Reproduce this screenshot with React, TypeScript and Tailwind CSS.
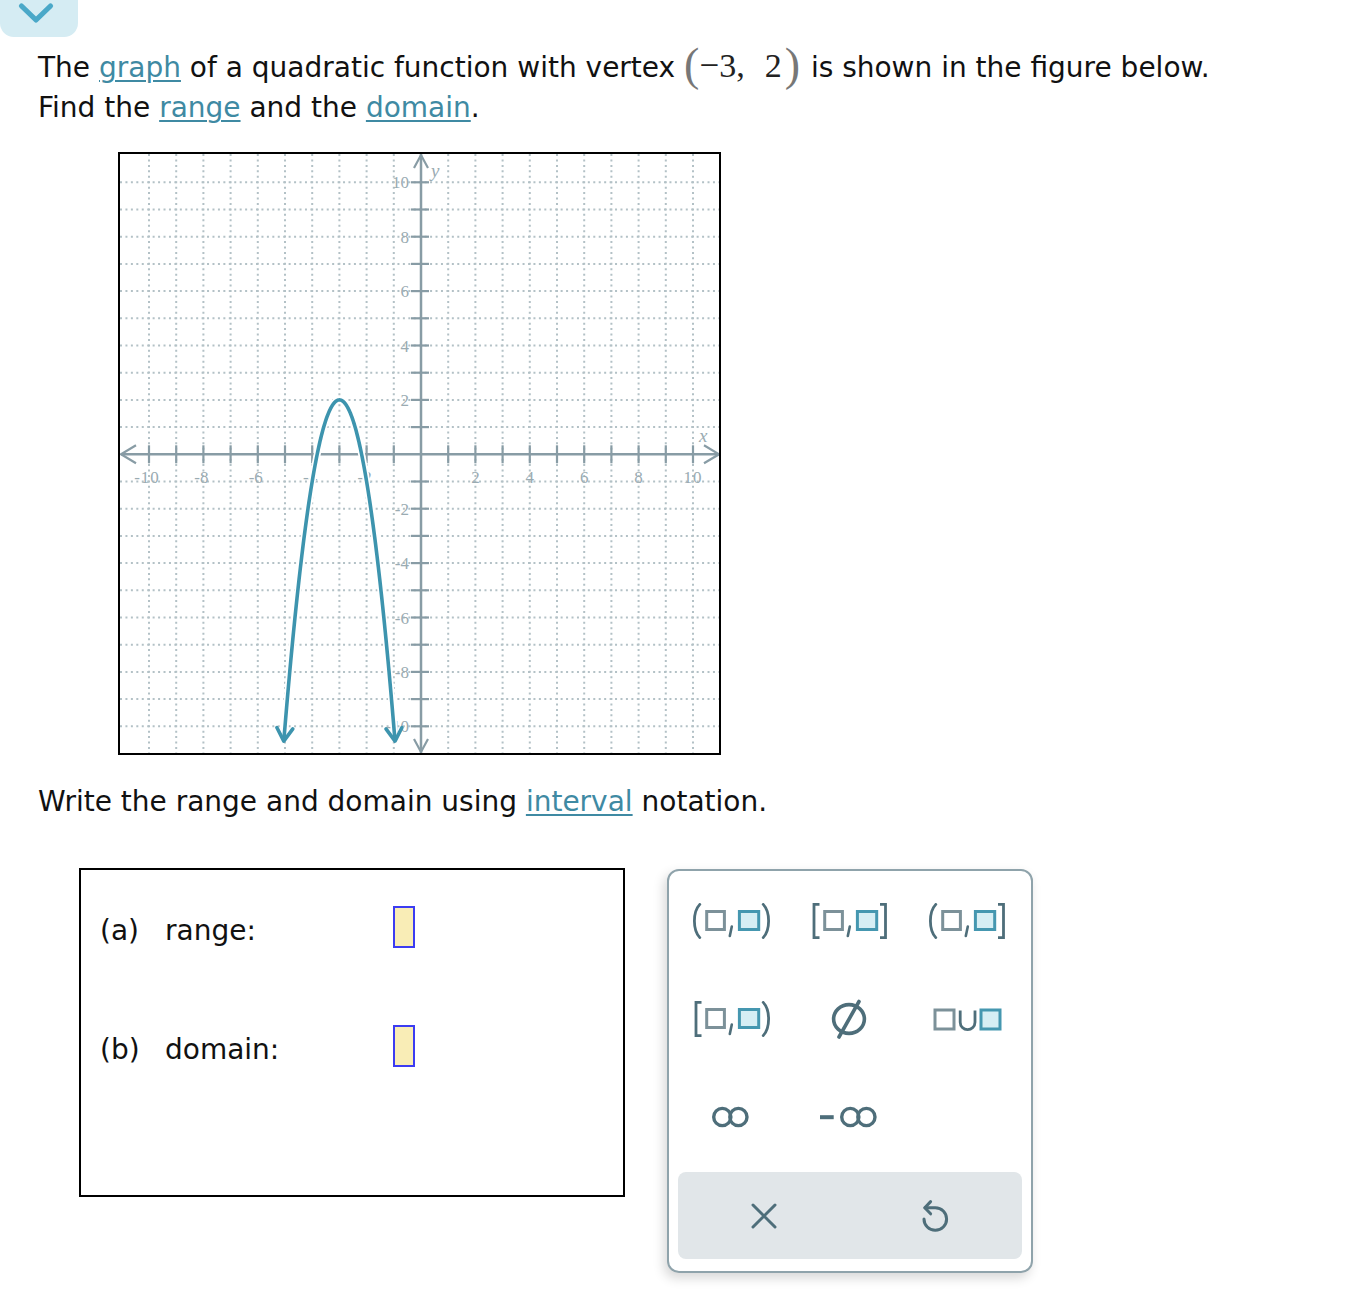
import React from "react";

const AX = "#889ca5";
const GRID = "#b3c1c6";
const LBL = "#9aabb2";
const CURVE = "#3d94ae";
const ICON = "#4e6e7a";
const GRAYSQ = "#7c9199";
const BLUESQ = "#4597b0";
const BLUEFILL = "#d6eef4";

const X = (x: number) => 303 + 27.2 * x;
const Y = (y: number) => 302.3 - 27.2 * y;

function Graph() {
  const ints: number[] = [];
  for (let i = -10; i <= 10; i++) if (i !== 0) ints.push(i);
  const x0 = X(0);
  const y0 = Y(0);

  const pts: string[] = [];
  const T = 2.045;
  for (let k = 0; k <= 160; k++) {
    const t = -T + (2 * T * k) / 160;
    const x = -3 + t;
    const y = -3 * t * t + 2;
    pts.push(`${X(x).toFixed(2)},${Y(y).toFixed(2)}`);
  }
  const curve = "M" + pts.join(" L");

  const head = (t: number) => {
    const x = -3 + t;
    const y = -3 * t * t + 2;
    const tx = X(x);
    const ty = Y(y);
    const s = Math.sign(t);
    let dx = s * 1;
    let dy = -(-6 * t) * s;
    const len = Math.hypot(dx, dy);
    dx /= len;
    dy /= len;
    const nx = -dy;
    const ny = dx;
    const bx = tx - 13 * dx;
    const by = ty - 13 * dy;
    return `M${(bx + 8 * nx).toFixed(2)},${(by + 8 * ny).toFixed(2)} L${tx.toFixed(2)},${ty.toFixed(2)} L${(bx - 8 * nx).toFixed(2)},${(by - 8 * ny).toFixed(2)}`;
  };

  return (
    <svg width="603" height="603" viewBox="0 0 603 603" className="block">
      <rect x="0" y="0" width="603" height="603" fill="#ffffff" />
      {ints.map((i) => (
        <line key={"v" + i} x1={X(i)} y1={2} x2={X(i)} y2={601} stroke={GRID} strokeWidth={2} strokeDasharray="2 3.44" />
      ))}
      {ints.map((i) => (
        <line key={"h" + i} x1={2} y1={Y(i)} x2={601} y2={Y(i)} stroke={GRID} strokeWidth={2} strokeDasharray="2 3.44" />
      ))}
      <line x1={3} y1={y0} x2={601} y2={y0} stroke={AX} strokeWidth={2.5} />
      <line x1={x0} y1={2} x2={x0} y2={601} stroke={AX} strokeWidth={2.5} />
      <path d={`M${3 + 15},${y0 - 9} L3,${y0} L${3 + 15},${y0 + 9}`} fill="none" stroke={AX} strokeWidth={2.2} />
      <path d={`M${601 - 15},${y0 - 9} L601,${y0} L${601 - 15},${y0 + 9}`} fill="none" stroke={AX} strokeWidth={2.2} />
      <path d={`M${x0 - 7},${3 + 13} L${x0},3 L${x0 + 7},${3 + 13}`} fill="none" stroke={AX} strokeWidth={2.2} />
      <path d={`M${x0 - 7},${600 - 13} L${x0},600 L${x0 + 7},${600 - 13}`} fill="none" stroke={AX} strokeWidth={2.2} />
      {ints.map((i) => (
        <line key={"tx" + i} x1={X(i)} y1={y0 - 9} x2={X(i)} y2={y0 + 9} stroke={AX} strokeWidth={2.2} />
      ))}
      {ints.map((i) => (
        <line key={"ty" + i} x1={x0 - 10} y1={Y(i)} x2={x0 + 8} y2={Y(i)} stroke={AX} strokeWidth={2.2} />
      ))}
      <g fontFamily="'Liberation Serif', 'Times New Roman', serif" fontSize="17" fill={LBL}>
        {ints
          .filter((i) => i % 2 === 0)
          .map((i) => (
            <text key={"lx" + i} x={X(i) - (i < 0 ? 2 : 0)} y={y0 + 29} textAnchor="middle" letterSpacing={i === -10 || i === 10 ? 1 : 0}>
              {i < 0 ? "-" + Math.abs(i) : String(i)}
            </text>
          ))}
        {ints
          .filter((i) => i % 2 === 0)
          .map((i) => (
            <text key={"ly" + i} x={x0 - 12} y={Y(i) + 6} textAnchor="end">
              {i < 0 ? "-" + Math.abs(i) : String(i)}
            </text>
          ))}
      </g>
      <g fontFamily="'Liberation Serif', 'Times New Roman', serif" fontSize="19" fontStyle="italic" fill={LBL}>
        <text x={313} y={25}>y</text>
        <text x={581} y={290}>x</text>
      </g>
      <path d={curve} fill="none" stroke="#ffffff" strokeWidth={7} strokeLinejoin="round" />
      <path d={curve} fill="none" stroke={CURVE} strokeWidth={3.6} strokeLinejoin="round" />
      <path d={head(-T)} fill="none" stroke={CURVE} strokeWidth={3.6} strokeLinecap="round" strokeLinejoin="round" />
      <path d={head(T)} fill="none" stroke={CURVE} strokeWidth={3.6} strokeLinecap="round" strokeLinejoin="round" />
      <rect x="1" y="1" width="601" height="601" fill="none" stroke="#000000" strokeWidth={2} />
    </svg>
  );
}

type Delim = "(" | ")" | "[" | "]";

function IntervalIcon({ left, right }: { left: Delim; right: Delim }) {
  return (
    <svg width="81" height="36" viewBox="0 0 81 36" className="block">
      {left === "(" ? (
        <path d="M8.8 1.4 C1.6 9, 1.6 27, 8.8 34.6" fill="none" stroke={ICON} strokeWidth={2.8} strokeLinecap="round" />
      ) : (
        <path d="M10.5 1.4 H5 V34.6 H10.5" fill="none" stroke={ICON} strokeWidth={2.8} />
      )}
      <rect x="15.7" y="8.5" width="17.7" height="18" fill="#ffffff" stroke={GRAYSQ} strokeWidth={3} />
      <path d="M40.8 23.5 L38.8 33" fill="none" stroke={ICON} strokeWidth={2.6} strokeLinecap="round" />
      <rect x="48.4" y="8.5" width="19.3" height="18" fill={BLUEFILL} stroke={BLUESQ} strokeWidth={3} />
      {right === ")" ? (
        <path d="M72.2 1.4 C79.4 9, 79.4 27, 72.2 34.6" fill="none" stroke={ICON} strokeWidth={2.8} strokeLinecap="round" />
      ) : (
        <path d="M71 1.4 H76.5 V34.6 H71" fill="none" stroke={ICON} strokeWidth={2.8} />
      )}
    </svg>
  );
}

function EmptySetIcon() {
  return (
    <svg width="40" height="42" viewBox="0 0 40 42" className="block">
      <ellipse cx="20" cy="21" rx="15.4" ry="14.4" fill="none" stroke={ICON} strokeWidth={3.6} />
      <line x1="10" y1="39" x2="30" y2="3.5" stroke={ICON} strokeWidth={3.6} strokeLinecap="round" />
    </svg>
  );
}

function UnionIcon() {
  return (
    <svg width="70" height="25" viewBox="0 0 70 25" className="block">
      <rect x="3" y="3" width="19" height="19" fill="#ffffff" stroke={GRAYSQ} strokeWidth={3} />
      <path d="M28.2 3.5 V15.2 A7.4 7.4 0 0 0 43 15.2 V3.5" fill="none" stroke={ICON} strokeWidth={2.8} />
      <rect x="49" y="3" width="19" height="19" fill={BLUEFILL} stroke={BLUESQ} strokeWidth={3} />
    </svg>
  );
}

function InfinityIcon({ neg }: { neg?: boolean }) {
  if (neg) {
    return (
      <svg width="62" height="24" viewBox="0 0 62 24" className="block">
        <rect x="2" y="10.2" width="13.7" height="4" fill={ICON} />
        <circle cx="32.3" cy="12" r="8.6" fill="none" stroke={ICON} strokeWidth={3.4} />
        <circle cx="48.4" cy="12" r="8.6" fill="none" stroke={ICON} strokeWidth={3.4} />
      </svg>
    );
  }
  return (
    <svg width="40" height="24" viewBox="0 0 40 24" className="block">
      <circle cx="11.3" cy="12" r="8.6" fill="none" stroke={ICON} strokeWidth={3.4} />
      <circle cx="27.4" cy="12" r="8.6" fill="none" stroke={ICON} strokeWidth={3.4} />
    </svg>
  );
}

function XIcon() {
  return (
    <svg width="26" height="26" viewBox="0 0 26 26" className="block">
      <path d="M2 2 L24 24 M24 2 L2 24" fill="none" stroke={ICON} strokeWidth={3} strokeLinecap="round" />
    </svg>
  );
}

function UndoIcon() {
  return (
    <svg width="32" height="38" viewBox="0 0 32 38" className="block">
      <path d="M10.6 4.6 L4.8 10.7 L10.6 16.8" fill="none" stroke={ICON} strokeWidth={3} strokeLinecap="round" strokeLinejoin="round" />
      <path d="M5 10.7 H15.3 A11.3 11.3 0 1 1 4 22" fill="none" stroke={ICON} strokeWidth={3} strokeLinecap="round" />
    </svg>
  );
}

function Link({ children }: { children: React.ReactNode }) {
  return <span className="text-[#3f8aa3] underline decoration-[1.5px] underline-offset-[3px]">{children}</span>;
}

function AnswerInput() {
  return <div className="w-[22px] h-[42px] bg-[#f9edb6] border-2 border-[#3c3cf2] shrink-0" />;
}

export default function App() {
  return (
    <div className="min-h-[1314px] w-[1346px] bg-white text-[#111] font-['DejaVu_Sans','Verdana',sans-serif] text-[28px]">
      <div className="w-[78px] h-[37px] bg-[#d5ecf3] rounded-b-[14px] flex items-start justify-center">
        <svg width="40" height="26" viewBox="0 0 40 26" className="block ml-[-6px]">
          <path d="M5.5 6 L20 20 L34.5 6" fill="none" stroke="#4aa8c8" strokeWidth={5.2} strokeLinecap="round" strokeLinejoin="round" />
        </svg>
      </div>
      <div className="pl-[38px] pt-[11px]">
        <p className="leading-[40px] whitespace-nowrap">
          The <Link>graph</Link> of a quadratic function with vertex{" "}
          <span className="font-['Liberation_Serif','Times_New_Roman',serif]">
            <span className="text-[46px] leading-[0] text-[#777] align-[-3px]">(</span>
            <span className="text-[35px] leading-[0] text-[#222]">−</span>
            <span className="text-[34px] leading-[0] text-[#222]">3,</span>
            <span className="text-[34px] leading-[0] text-[#222] ml-[20px]">2</span>
            <span className="text-[46px] leading-[0] text-[#777] align-[-3px] ml-[3px] mr-[2px]">)</span>
          </span>{" "}
          is shown in the figure below.
          <br />
          Find the <Link>range</Link> and the <Link>domain</Link>.
        </p>
        <div className="mt-[24px] ml-[80px] w-[603px] h-[603px]">
          <Graph />
        </div>
        <p className="mt-[27px] leading-[40px]">
          Write the range and domain using <Link>interval</Link> notation.
        </p>
        <div className="mt-[46px] ml-[41px] flex items-start gap-[42px]">
          <div className="w-[546px] h-[329px] border-2 border-black pt-[36px] pl-[19px]">
            <div className="flex items-start">
              <div className="w-[293px] pt-[5px] leading-[40px] flex">
                <span className="w-[65px]">(a)</span>
                <span>range:</span>
              </div>
              <AnswerInput />
            </div>
            <div className="flex items-start mt-[74px]">
              <div className="w-[293px] pt-[5px] leading-[40px] flex">
                <span className="w-[65px]">(b)</span>
                <span>domain:</span>
              </div>
              <AnswerInput />
            </div>
          </div>
          <div className="mt-px w-[366px] h-[404px] border-2 border-[#8fa3ab] rounded-[12px] bg-white shadow-[-3px_5px_12px_rgba(0,0,0,0.16)] pt-[1px] pl-[3px]">
            <div className="grid grid-cols-[118px_118px_118px] grid-rows-[98px_98px_98px]">
              <div className="flex items-center justify-center">
                <IntervalIcon left="(" right=")" />
              </div>
              <div className="flex items-center justify-center">
                <IntervalIcon left="[" right="]" />
              </div>
              <div className="flex items-center justify-center">
                <IntervalIcon left="(" right="]" />
              </div>
              <div className="flex items-center justify-center">
                <IntervalIcon left="[" right=")" />
              </div>
              <div className="flex items-center justify-center">
                <EmptySetIcon />
              </div>
              <div className="flex items-center justify-center">
                <UnionIcon />
              </div>
              <div className="flex items-center justify-center">
                <InfinityIcon />
              </div>
              <div className="flex items-center justify-center">
                <InfinityIcon neg />
              </div>
              <div />
            </div>
            <div className="mt-[6px] ml-[6px] w-[344px] h-[87px] bg-[#e1e6e9] rounded-[8px] flex">
              <div className="flex-1 flex items-center justify-center">
                <XIcon />
              </div>
              <div className="flex-1 flex items-center justify-center">
                <UndoIcon />
              </div>
            </div>
          </div>
        </div>
      </div>
    </div>
  );
}
